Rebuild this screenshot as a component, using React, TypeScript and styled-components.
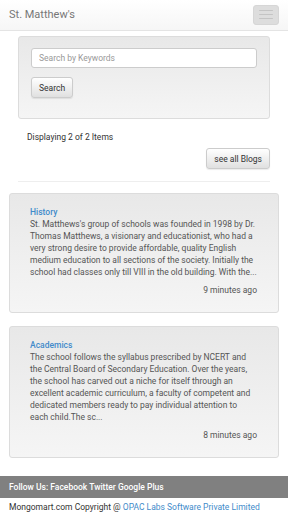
import styled, { createGlobalStyle } from 'styled-components';

const GlobalStyle = createGlobalStyle`
  html, body {
    margin: 0;
    padding: 0;
    background: #ffffff;
    font-family: Roboto, "Liberation Sans", Arial, sans-serif;
    color: #333333;
  }
  * {
    box-sizing: border-box;
  }
`;

interface Blog {
  id: number;
  title: string;
  summary: string;
  time: string;
}

const blogs: Blog[] = [
  {
    id: 1,
    title: 'History',
    summary:
      "St. Matthews's group of schools was founded in 1998 by Dr. Thomas Matthews, a visionary and educationist, who had a very strong desire to provide affordable, quality English medium education to all sections of the society. Initially the school had classes only till VIII in the old building. With the...",
    time: '9 minutes ago',
  },
  {
    id: 2,
    title: 'Academics',
    summary:
      'The school follows the syllabus prescribed by NCERT and the Central Board of Secondary Education. Over the years, the school has carved out a niche for itself through an excellent academic curriculum, a faculty of competent and dedicated members ready to pay individual attention to each child.The sc...',
    time: '8 minutes ago',
  },
];

const App = () => {
  return (
    <>
      <GlobalStyle />
      <Navbar>
        <Brand>St. Matthew's</Brand>
        <Toggle aria-label="menu">
          <Bar />
          <Bar />
          <Bar />
        </Toggle>
      </Navbar>
      <Container>
        <Well>
          <SearchInput placeholder="Search by Keywords" />
          <Button>Search</Button>
        </Well>
        <Count>Displaying 2 of 2 Items</Count>
        <RightRow>
          <Button>see all Blogs</Button>
        </RightRow>
        <Rule />
      </Container>
      <Cards>
        {blogs.map((blog) => (
          <Card key={blog.id}>
            <CardTitle href="#">{blog.title}</CardTitle>
            <Summary>{blog.summary}</Summary>
            <Time>{blog.time}</Time>
          </Card>
        ))}
      </Cards>
      <Footer>
        <Follow>Follow Us: Facebook Twitter Google Plus</Follow>
        <Copyright>
          Mongomart.com Copyright @ <a href="#">OPAC Labs Software Private Limited</a>
        </Copyright>
      </Footer>
    </>
  );
};

export default App;

const Navbar = styled.div`
  height: 31px;
  display: flex;
  align-items: center;
  justify-content: space-between;
  padding: 0 9px;
  background: linear-gradient(to bottom, #ffffff 0%, #f6f6f6 100%);
  border-bottom: 1px solid #e4e4e4;
`;

const Brand = styled.div`
  font-size: 11px;
  color: #777777;
  padding-bottom: 1px;
`;

const Toggle = styled.button`
  width: 26px;
  height: 20px;
  margin-bottom: 1px;
  padding: 0;
  background: #dddddd;
  border: 1px solid #d6d6d6;
  border-radius: 3px;
  display: flex;
  flex-direction: column;
  align-items: center;
  justify-content: center;
  gap: 2.5px;
`;

const Bar = styled.span`
  display: block;
  width: 14px;
  height: 1.5px;
  background: #c4c4c4;
  border-radius: 1px;
`;

const Container = styled.div`
  padding: 0 18px;
`;

const Well = styled.div`
  margin-top: 5px;
  padding: 11px 12px 20px;
  background: linear-gradient(to bottom, #e8e8e8 0%, #f5f5f5 100%);
  border: 1px solid #dcdcdc;
  border-radius: 3px;
  display: flex;
  flex-direction: column;
  align-items: flex-start;
  gap: 9px;
`;

const SearchInput = styled.input`
  width: 100%;
  height: 20px;
  padding: 0 7px;
  font-family: inherit;
  font-size: 8.5px;
  color: #555555;
  background: #ffffff;
  border: 1px solid #cccccc;
  border-radius: 3px;
  outline: none;
  &::placeholder {
    color: #999999;
  }
`;

const Button = styled.button`
  height: 21px;
  padding: 0 7px;
  font-family: inherit;
  font-size: 8.5px;
  color: #333333;
  background: linear-gradient(to bottom, #ffffff 0%, #e0e0e0 100%);
  border: 1px solid #cccccc;
  border-radius: 3px;
  box-shadow: 0 1px 1px rgba(0, 0, 0, 0.08);
`;

const Count = styled.div`
  margin: 12px 0 0 9px;
  font-size: 8.5px;
  line-height: 12px;
  color: #333333;
`;

const RightRow = styled.div`
  display: flex;
  justify-content: flex-end;
  margin-top: 5px;
`;

const Rule = styled.div`
  margin-top: 12px;
  height: 1px;
  background: #eeeeee;
`;

const Cards = styled.div`
  margin: 11px 9px 0;
  display: flex;
  flex-direction: column;
  gap: 13px;
`;

const Card = styled.div`
  padding: 12px 21px 16px 20px;
  background: linear-gradient(to bottom, #e8e8e8 0%, #f5f5f5 100%);
  border: 1px solid #dcdcdc;
  border-radius: 3px;
  display: flex;
  flex-direction: column;
`;

const CardTitle = styled.a`
  font-size: 8.5px;
  font-weight: 500;
  line-height: 12px;
  color: #428bca;
  text-decoration: none;
`;

const Summary = styled.p`
  margin: 0;
  font-size: 8.5px;
  line-height: 12px;
  color: #555555;
`;

const Time = styled.div`
  margin-top: 6px;
  text-align: right;
  font-size: 8.5px;
  line-height: 12px;
  color: #555555;
`;

const Footer = styled.div`
  margin-top: 18px;
`;

const Follow = styled.div`
  height: 22px;
  padding: 0 9px;
  display: flex;
  align-items: center;
  background: #808080;
  color: #ffffff;
  font-size: 8.5px;
  font-weight: 500;
`;

const Copyright = styled.div`
  padding: 3px 9px;
  font-size: 8.5px;
  line-height: 12px;
  color: #333333;
  a {
    color: #428bca;
    text-decoration: none;
  }
`;
